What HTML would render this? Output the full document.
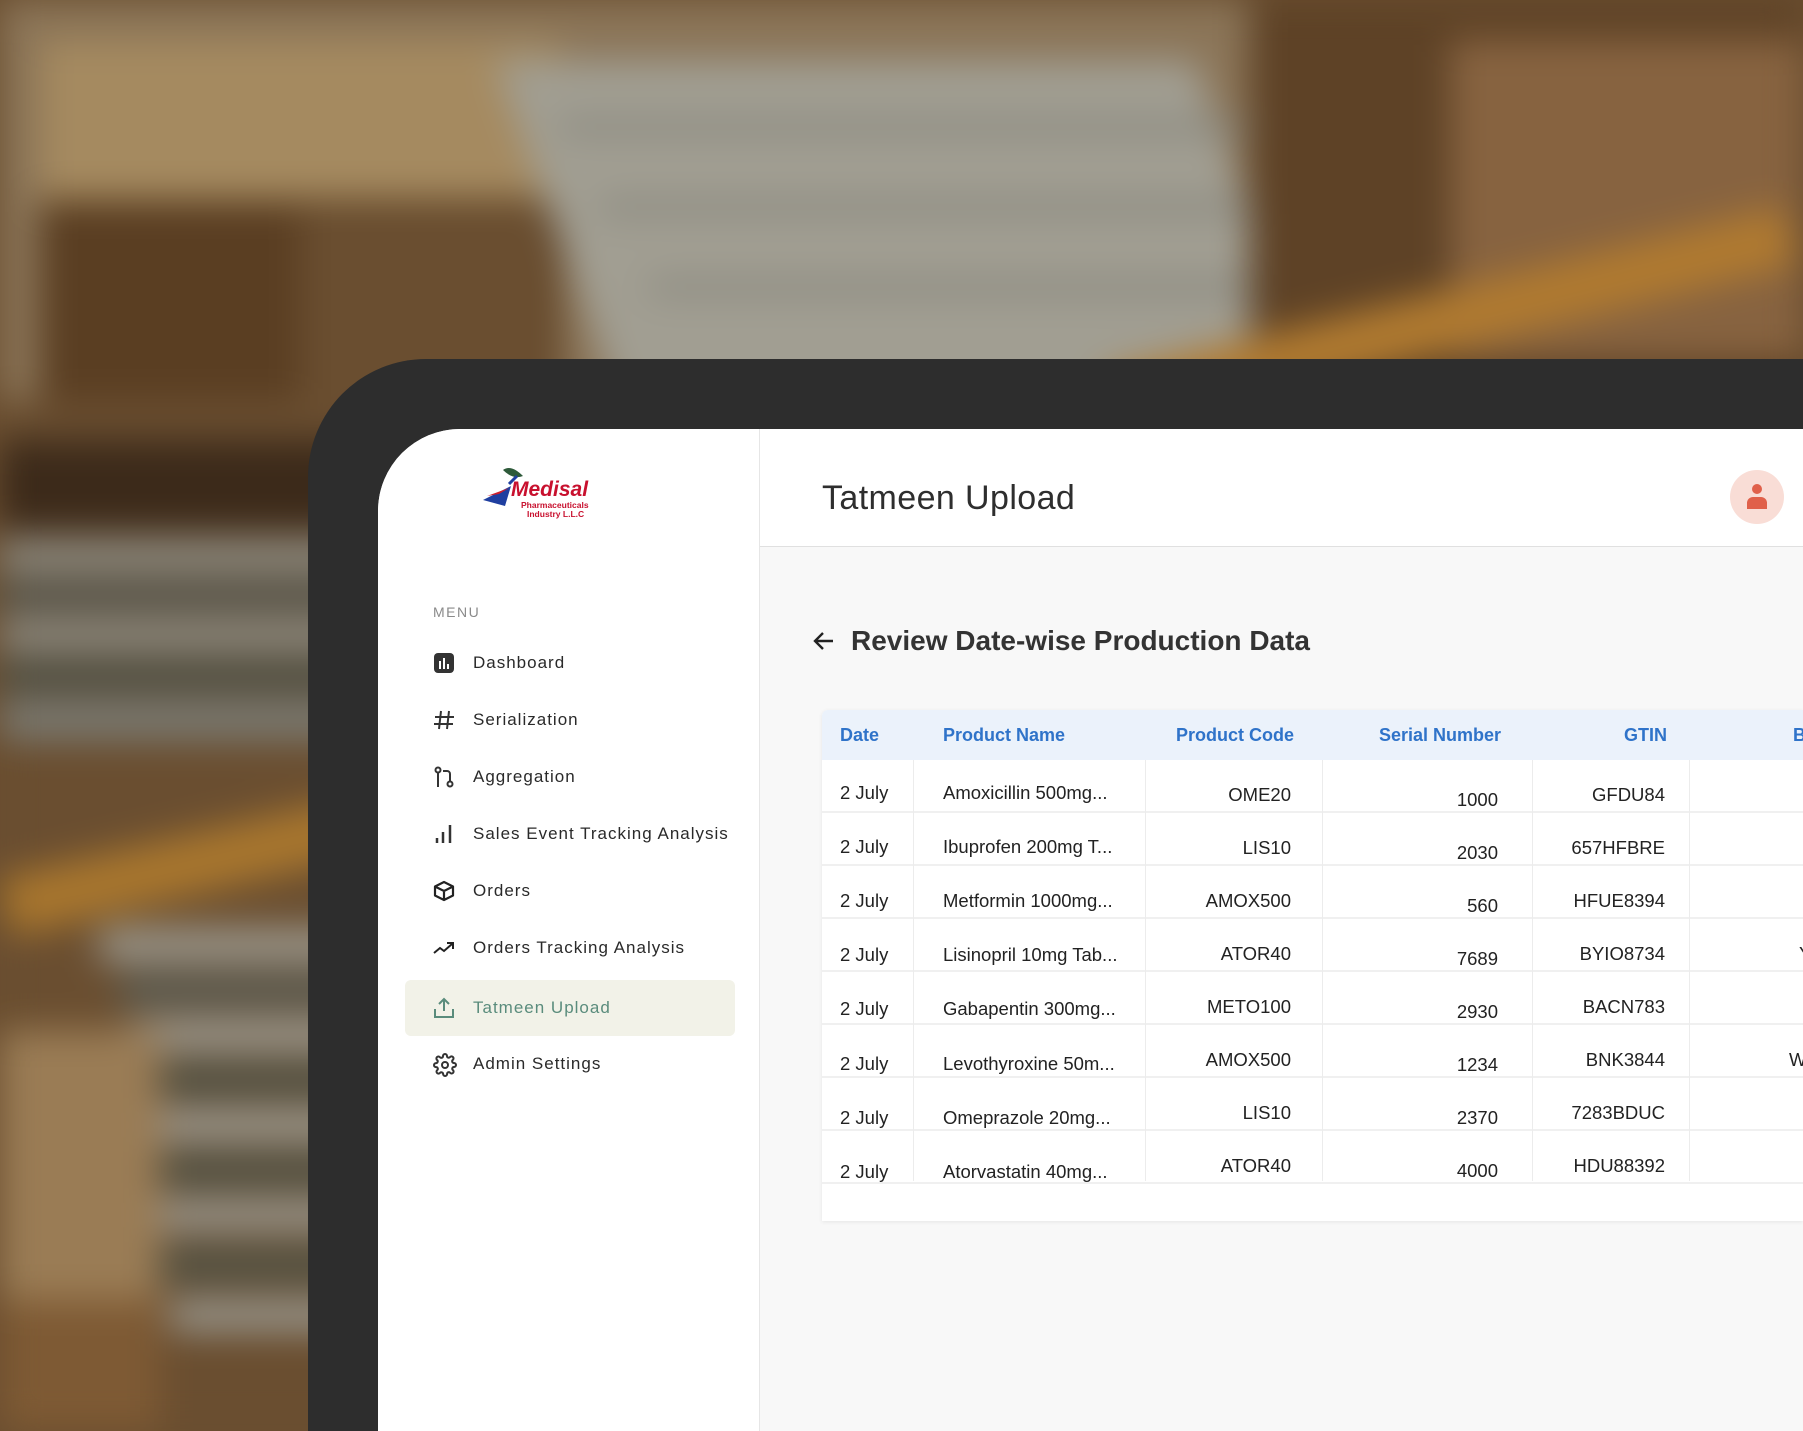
<!DOCTYPE html>
<html><head><meta charset="utf-8">
<style>
*{margin:0;padding:0;box-sizing:border-box}
html,body{width:1803px;height:1431px;overflow:hidden}
body{font-family:"Liberation Sans",sans-serif;background:#6a4e30}
#wrap{position:absolute;left:0;top:0;width:1803px;height:1431px;overflow:hidden}
#bg{position:absolute;left:0;top:0;width:1803px;height:1431px;overflow:hidden;filter:blur(18px)}
#bg div{position:absolute}
.dev{position:absolute;left:308px;top:359px;width:1495px;height:1072px;background:#2d2d2d;border-top-left-radius:118px}
.scr{position:absolute;left:378px;top:429px;width:1425px;height:1002px;background:#f8f8f8;border-top-left-radius:82px;overflow:hidden}
.side{position:absolute;left:0;top:0;width:382px;height:1002px;background:#fff;border-right:1px solid #e6e6e6}
.hdr{position:absolute;left:382px;top:0;right:0;height:118px;background:#fff;border-bottom:1.5px solid #e0e0e0}
.menu{position:absolute;left:55px;top:175px;font-size:14px;letter-spacing:1.5px;color:#8a8a8a}
.it{position:absolute;left:27px;width:330px;height:56px;font-size:17px;letter-spacing:1px;color:#2a2a2a}
.it svg{position:absolute;left:28px;top:17px}
.it span{position:absolute;left:68px;top:18px}
.it.act{background:#f2f2e8;border-radius:6px}
.it.act span{color:#5a8c7c}
.ttl{position:absolute;left:62px;top:50px;font-size:34px;color:#2e2e2e;letter-spacing:.4px}
.av{position:absolute;left:970px;top:41px;width:54px;height:54px;border-radius:50%;background:#f9ddd6}
.h2{position:absolute;left:473px;top:196px;font-size:28px;font-weight:bold;color:#333}
.card{position:absolute;left:444px;top:281px;width:981px;height:511px;background:#fff;box-shadow:0 1px 4px rgba(0,0,0,.08);border-radius:6px 0 0 0}
.th{position:absolute;left:0;top:0;right:0;height:50px;background:#ebf2fb;border-radius:6px 0 0 0}
.c{position:absolute;font-size:18.5px;white-space:nowrap}
.hc{color:#2f73c9;top:15px;font-weight:bold;font-size:18px}
.row{position:absolute;left:0;right:0;height:53px;border-bottom:2px solid #f0f0f0}
.vl{position:absolute;top:50px;width:1px;height:421px;background:#ececec}
.d{color:#222}
</style></head><body>
<div id="wrap">
<div id="bg">
<div style="left:0;top:0;width:1803px;height:420px;background:#8b7558"></div>
<div style="left:40px;top:40px;width:520px;height:180px;background:#a58a60"></div>
<div style="left:40px;top:200px;width:520px;height:220px;background:#5a3e22"></div>
<div style="left:300px;top:210px;width:250px;height:210px;background:#6a4e30"></div>
<div style="left:560px;top:60px;width:700px;height:360px;background:#a19e92;transform:skewX(20deg)"></div>
<div style="left:560px;top:120px;width:700px;height:14px;background:#86857c;transform:skewX(20deg)"></div>
<div style="left:600px;top:200px;width:700px;height:14px;background:#86857c;transform:skewX(20deg)"></div>
<div style="left:650px;top:280px;width:700px;height:14px;background:#86857c;transform:skewX(20deg)"></div>
<div style="left:1250px;top:0;width:553px;height:420px;background:#5e4226"></div>
<div style="left:1450px;top:40px;width:353px;height:320px;background:#876340"></div>
<div style="left:1100px;top:290px;width:700px;height:60px;background:#b07a30;transform:rotate(-14deg)"></div>
<div style="left:0;top:400px;width:360px;height:1031px;background:#6a4e30"></div>
<div style="left:0;top:440px;width:360px;height:90px;background:#3c2a1a"></div>
<div style="left:0;top:540px;width:360px;height:30px;background:#8e8e86"></div>
<div style="left:0;top:580px;width:360px;height:30px;background:#5a5c54"></div>
<div style="left:0;top:620px;width:360px;height:30px;background:#8e8e86"></div>
<div style="left:0;top:660px;width:360px;height:30px;background:#4e5248"></div>
<div style="left:0;top:700px;width:360px;height:40px;background:#7a7a72"></div>
<div style="left:0;top:830px;width:420px;height:60px;background:#a8762e;transform:rotate(-13deg)"></div>
<div style="left:100px;top:930px;width:300px;height:30px;background:#a0a098"></div>
<div style="left:120px;top:975px;width:300px;height:30px;background:#5a5e56"></div>
<div style="left:130px;top:1020px;width:300px;height:30px;background:#a0a098"></div>
<div style="left:140px;top:1065px;width:300px;height:30px;background:#505448"></div>
<div style="left:140px;top:1110px;width:300px;height:30px;background:#a0a098"></div>
<div style="left:150px;top:1155px;width:300px;height:30px;background:#505448"></div>
<div style="left:160px;top:1200px;width:300px;height:30px;background:#9c9c94"></div>
<div style="left:160px;top:1250px;width:300px;height:30px;background:#505448"></div>
<div style="left:170px;top:1300px;width:300px;height:30px;background:#9c9c94"></div>
<div style="left:0;top:1030px;width:160px;height:401px;background:#9a7c55"></div>
<div style="left:0;top:1300px;width:160px;height:131px;background:#7e5a34"></div>
</div>
<div class="dev"></div>
<div class="scr">
 <div class="side">
  <svg style="position:absolute;left:103px;top:33px" width="130" height="60" viewBox="0 0 130 60">
   <path d="M22 8 Q30 2 42 14 Q32 18 22 8Z" fill="#2e5a3a"/>
   <path d="M2 38 L30 24 L24 44 Z" fill="#1f3fa0"/>
   <path d="M6 34 L28 26 L18 32 Z" fill="#d01e2a"/>
   <path d="M28 22 L36 14" stroke="#1f3fa0" stroke-width="3"/>
   <text x="30" y="34" font-family="Liberation Sans" font-weight="bold" font-style="italic" font-size="21" fill="#c8102e">Medisal</text>
   <text x="40" y="46" font-family="Liberation Sans" font-weight="bold" font-size="8.5" fill="#c8102e">Pharmaceuticals</text>
   <text x="46" y="55" font-family="Liberation Sans" font-weight="bold" font-size="8.5" fill="#c8102e">Industry L.L.C</text>
  </svg>
  <div class="menu">MENU</div>
  <div class="it" style="top:206px"><svg width="22" height="22" viewBox="0 0 22 22"><rect x="1" y="1" width="20" height="20" rx="4" fill="#333"/><path d="M7 9v8M11 6v11M15 12v5" stroke="#fff" stroke-width="2"/></svg><span>Dashboard</span></div>
  <div class="it" style="top:263px"><svg width="22" height="22" viewBox="0 0 22 22" fill="none" stroke="#333" stroke-width="2"><path d="M8 2L6 20M16 2L14 20M2 8h19M1 15h19"/></svg><span>Serialization</span></div>
  <div class="it" style="top:320px"><svg width="22" height="22" viewBox="0 0 22 22" fill="none" stroke="#333" stroke-width="2"><circle cx="5" cy="4" r="2.5"/><path d="M5 7v14"/><circle cx="17" cy="18" r="2.5"/><path d="M17 15V8a3 3 0 0 0-3-3h-4"/></svg><span>Aggregation</span></div>
  <div class="it" style="top:377px"><svg width="22" height="22" viewBox="0 0 22 22" stroke="#333" stroke-width="2.5"><path d="M4 15v5M10 9v11M17 2v18"/></svg><span>Sales Event Tracking Analysis</span></div>
  <div class="it" style="top:434px"><svg width="22" height="22" viewBox="0 0 22 22" fill="none" stroke="#222" stroke-width="2.2" stroke-linejoin="round"><path d="M11 2l9 4.5v9L11 20l-9-4.5v-9z M2 6.5l9 4.5 9-4.5M11 11v9"/></svg><span>Orders</span></div>
  <div class="it" style="top:491px"><svg width="22" height="22" viewBox="0 0 22 22" fill="none" stroke="#222" stroke-width="2"><path d="M1 16l6-5 4 3 8-7M14 6h6v6"/></svg><span>Orders Tracking Analysis</span></div>
  <div class="it act" style="top:551px"><svg width="22" height="22" viewBox="0 0 22 22" fill="none" stroke="#5a8c7c" stroke-width="2"><path d="M11 14V2M6 7l5-5 5 5M2 12v8h18v-8"/></svg><span>Tatmeen Upload</span></div>
  <div class="it" style="top:607px"><svg width="24" height="24" viewBox="0 0 24 24" fill="none" stroke="#333" stroke-width="2"><circle cx="12" cy="12" r="3"/><path d="M19.4 15a1.7 1.7 0 0 0 .3 1.8l.1.1a2 2 0 1 1-2.8 2.8l-.1-.1a1.7 1.7 0 0 0-1.8-.3 1.7 1.7 0 0 0-1 1.5V21a2 2 0 1 1-4 0v-.1a1.7 1.7 0 0 0-1.1-1.5 1.7 1.7 0 0 0-1.8.3l-.1.1a2 2 0 1 1-2.8-2.8l.1-.1a1.7 1.7 0 0 0 .3-1.800 1.7 1.7 0 0 0-1.5-1H3a2 2 0 1 1 0-4h.1a1.7 1.7 0 0 0 1.5-1.1 1.7 1.7 0 0 0-.3-1.8l-.1-.1a2 2 0 1 1 2.8-2.8l.1.1a1.7 1.7 0 0 0 1.8.3H9a1.7 1.7 0 0 0 1-1.5V3a2 2 0 1 1 4 0v.1a1.7 1.7 0 0 0 1 1.5 1.7 1.7 0 0 0 1.8-.3l.1-.1a2 2 0 1 1 2.8 2.8l-.1.1a1.7 1.7 0 0 0-.3 1.8V9a1.7 1.7 0 0 0 1.5 1H21a2 2 0 1 1 0 4h-.1a1.7 1.7 0 0 0-1.5 1z"/></svg><span>Admin Settings</span></div>
 </div>
 <div class="hdr">
  <div class="ttl">Tatmeen Upload</div>
  <div class="av"><svg style="position:absolute;left:15px;top:13px" width="24" height="28" viewBox="0 0 24 28" fill="#e0604a"><circle cx="12" cy="6" r="5"/><path d="M2 26v-6a6 6 0 0 1 6-6h8a6 6 0 0 1 6 6v6z"/></svg></div>
 </div>
 <svg style="position:absolute;left:434px;top:200px" width="24" height="24" viewBox="0 0 24 24" fill="none" stroke="#222" stroke-width="2.4"><path d="M21 12H4M11 4l-8 8 8 8"/></svg>
 <div class="h2">Review Date-wise Production Data</div>
 <div class="card">
  <div class="th"></div>
  <div class="c hc" style="left:18px">Date</div>
  <div class="c hc" style="left:121px">Product Name</div>
  <div class="c hc" style="right:509px">Product Code</div>
  <div class="c hc" style="right:302px">Serial Number</div>
  <div class="c hc" style="right:136px">GTIN</div>
  <div class="c hc" style="left:971px">B</div>
  <div class="row" style="top:50px"></div><div class="row" style="top:103px"></div><div class="row" style="top:156px"></div><div class="row" style="top:209px"></div><div class="row" style="top:262px"></div><div class="row" style="top:315px"></div><div class="row" style="top:368px"></div><div class="row" style="top:421px"></div>
  <div class="vl" style="left:91px"></div><div class="vl" style="left:323px"></div><div class="vl" style="left:500px"></div><div class="vl" style="left:710px"></div><div class="vl" style="left:867px"></div>
  <div class="c d" style="left:18px;top:72px">2 July</div><div class="c d" style="left:121px;top:72px">Amoxicillin 500mg...</div><div class="c d" style="right:512px;top:74px">OME20</div><div class="c d" style="right:305px;top:79px">1000</div><div class="c d" style="right:138px;top:74px">GFDU84</div>
  <div class="c d" style="left:18px;top:126px">2 July</div><div class="c d" style="left:121px;top:126px">Ibuprofen 200mg T...</div><div class="c d" style="right:512px;top:127px">LIS10</div><div class="c d" style="right:305px;top:132px">2030</div><div class="c d" style="right:138px;top:127px">657HFBRE</div>
  <div class="c d" style="left:18px;top:180px">2 July</div><div class="c d" style="left:121px;top:180px">Metformin 1000mg...</div><div class="c d" style="right:512px;top:180px">AMOX500</div><div class="c d" style="right:305px;top:185px">560</div><div class="c d" style="right:138px;top:180px">HFUE8394</div>
  <div class="c d" style="left:18px;top:234px">2 July</div><div class="c d" style="left:121px;top:234px">Lisinopril 10mg Tab...</div><div class="c d" style="right:512px;top:233px">ATOR40</div><div class="c d" style="right:305px;top:238px">7689</div><div class="c d" style="right:138px;top:233px">BYIO8734</div><div class="c d" style="left:977px;top:233px">Y</div>
  <div class="c d" style="left:18px;top:288px">2 July</div><div class="c d" style="left:121px;top:288px">Gabapentin 300mg...</div><div class="c d" style="right:512px;top:286px">METO100</div><div class="c d" style="right:305px;top:291px">2930</div><div class="c d" style="right:138px;top:286px">BACN783</div>
  <div class="c d" style="left:18px;top:343px">2 July</div><div class="c d" style="left:121px;top:343px">Levothyroxine 50m...</div><div class="c d" style="right:512px;top:339px">AMOX500</div><div class="c d" style="right:305px;top:344px">1234</div><div class="c d" style="right:138px;top:339px">BNK3844</div><div class="c d" style="left:967px;top:339px">W</div>
  <div class="c d" style="left:18px;top:397px">2 July</div><div class="c d" style="left:121px;top:397px">Omeprazole 20mg...</div><div class="c d" style="right:512px;top:392px">LIS10</div><div class="c d" style="right:305px;top:397px">2370</div><div class="c d" style="right:138px;top:392px">7283BDUC</div>
  <div class="c d" style="left:18px;top:451px">2 July</div><div class="c d" style="left:121px;top:451px">Atorvastatin 40mg...</div><div class="c d" style="right:512px;top:445px">ATOR40</div><div class="c d" style="right:305px;top:450px">4000</div><div class="c d" style="right:138px;top:445px">HDU88392</div>
 </div>
</div>
</div>
</body></html>
